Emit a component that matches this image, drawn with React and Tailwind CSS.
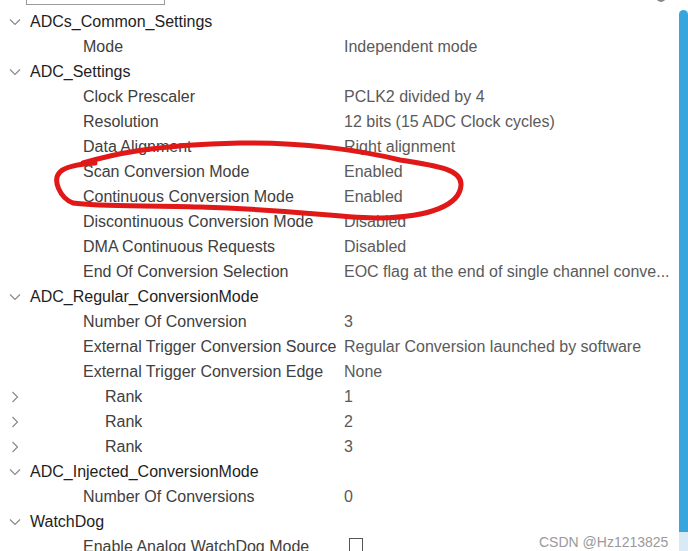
const rows = [
  { t: "group", label: "ADCs_Common_Settings" },
  { t: "item", label: "Mode", value: "Independent mode" },
  { t: "group", label: "ADC_Settings" },
  { t: "item", label: "Clock Prescaler", value: "PCLK2 divided by 4" },
  { t: "item", label: "Resolution", value: "12 bits (15 ADC Clock cycles)" },
  { t: "item", label: "Data Alignment", value: "Right alignment" },
  { t: "item", label: "Scan Conversion Mode", value: "Enabled" },
  { t: "item", label: "Continuous Conversion Mode", value: "Enabled" },
  { t: "item", label: "Discontinuous Conversion Mode", value: "Disabled" },
  { t: "item", label: "DMA Continuous Requests", value: "Disabled" },
  { t: "item", label: "End Of Conversion Selection", value: "EOC flag at the end of single channel conve..." },
  { t: "group", label: "ADC_Regular_ConversionMode" },
  { t: "item", label: "Number Of Conversion", value: "3" },
  { t: "item", label: "External Trigger Conversion Source", value: "Regular Conversion launched by software" },
  { t: "item", label: "External Trigger Conversion Edge", value: "None" },
  { t: "rank", label: "Rank", value: "1" },
  { t: "rank", label: "Rank", value: "2" },
  { t: "rank", label: "Rank", value: "3" },
  { t: "group", label: "ADC_Injected_ConversionMode" },
  { t: "item", label: "Number Of Conversions", value: "0" },
  { t: "group", label: "WatchDog" },
  { t: "check", label: "Enable Analog WatchDog Mode" },
];

function ChevronDown() {
  return (
    <svg width="12" height="8" viewBox="0 0 12 8" className="ml-[9px]">
      <path d="M1 1.5 L6 6.5 L11 1.5" fill="none" stroke="#8a8a8a" strokeWidth="1.2" />
    </svg>
  );
}

function ChevronRight() {
  return (
    <svg width="8" height="12" viewBox="0 0 8 12" className="ml-[11px]">
      <path d="M1.5 1 L6.5 6 L1.5 11" fill="none" stroke="#8a8a8a" strokeWidth="1.2" />
    </svg>
  );
}

function Row({ r }) {
  if (r.t === "group") {
    return (
      <div className="h-[25px] flex items-center">
        <div className="w-[30px] flex items-center">
          <ChevronDown />
        </div>
        <span className="text-[#1e1e1e]">{r.label}</span>
      </div>
    );
  }
  return (
    <div className="h-[25px] flex items-center">
      <div className={r.t === "rank" ? "w-[105px] flex items-center" : "w-[83px]"}>
        {r.t === "rank" && <ChevronRight />}
      </div>
      <span className={(r.t === "rank" ? "w-[239px]" : "w-[261px]") + " text-[#404040] whitespace-nowrap"}>
        {r.label}
      </span>
      {r.t === "check" ? (
        <span className="self-start ml-[5px] mt-[4px] w-[14px] h-[14px] border border-[#555]" />
      ) : (
        <span className="text-[#5a5a5a] whitespace-nowrap">{r.value}</span>
      )}
    </div>
  );
}

export default function App() {
  return (
    <div
      className="relative w-[688px] h-[551px] overflow-hidden bg-white text-[16px] leading-none"
      style={{ fontFamily: '"Liberation Sans", Arial, sans-serif' }}
    >
      <div className="h-[9px] flex">
        <div className="ml-[26px] w-[139px] h-[5px] border border-t-0 border-[#9a9a9a]" />
        <div className="ml-auto mr-[22px] -mt-[8px] w-[10px] h-[10px] rounded-full border-2 border-[#888]" />
      </div>
      <div className="flex">
        <div className="flex-1">
          {rows.map((r, i) => (
            <Row key={i} r={r} />
          ))}
        </div>
      </div>

      {/* scrollbar */}
      <div className="absolute right-0 top-[10px] w-[9px] h-[541px] flex flex-col">
        <div className="h-[522px] bg-[#36a6dc] rounded-t-[5px]" />
        <div className="flex-1 bg-[#d9e9f6]" />
      </div>

      {/* red hand-drawn mark */}
      <svg className="absolute left-0 top-0 pointer-events-none" width="688" height="551">
        <path
          d="M83 163 C110 155, 150 145, 240 143 C300 142, 360 150, 400 160 C440 166, 462 170, 461 185 C460 205, 430 217, 380 218 C340 218, 300 210, 200 207 C150 205, 100 207, 73 203 C60 198, 52 180, 60 172 C66 166, 80 164, 95 163"
          fill="none"
          stroke="#e01818"
          strokeWidth="5"
          strokeLinecap="round"
        />
      </svg>

      <span className="absolute left-[539px] top-[535px] text-[14px] text-[#9a9a9a]">CSDN @Hz1213825</span>
    </div>
  );
}
